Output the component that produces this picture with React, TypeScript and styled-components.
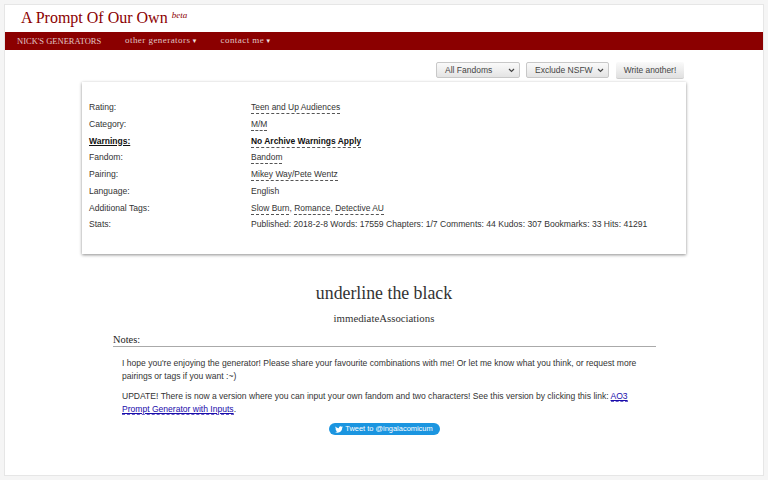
import React from "react";
import styled, { createGlobalStyle } from "styled-components";

const Global = createGlobalStyle`
  html, body { margin: 0; padding: 0; background: #f5f5f5; }
  #root { display: block; }
`;

const Page = styled.div`
  box-sizing: border-box;
  width: 768px;
  height: 480px;
  padding: 5px;
  background: #f5f5f5;
  font-family: "Liberation Sans", Arial, sans-serif;
  overflow: hidden;
`;

const Sheet = styled.main`
  box-sizing: border-box;
  width: 758px;
  height: 470px;
  background: #fff;
  box-shadow: 0 0 0 1px #e6e6e6;
  display: flex;
  flex-direction: column;
`;

const Header = styled.header`
  height: 27px;
  padding-left: 16px;
  display: flex;
  align-items: flex-start;
`;

const Title = styled.h1`
  margin: 3px 0 0;
  font: 400 16px/20px "Liberation Serif", "Times New Roman", serif;
  color: #8b0000;
  white-space: nowrap;
`;

const Beta = styled.sup`
  font-size: 9px;
  font-style: italic;
  line-height: 0;
  vertical-align: 5px;
`;

const Nav = styled.nav`
  height: 18px;
  background: #8b0000;
  display: flex;
  align-items: center;
  padding-left: 12px;
  font: 400 9px/17px "Liberation Serif", "Times New Roman", serif;
  color: #e0c4c4;
`;

const NavBrand = styled.span`
  width: 108px;
  font-size: 8.5px;
  white-space: nowrap;
`;

const NavItem = styled.span`
  width: 95.5px;
  white-space: nowrap;
  letter-spacing: 0.45px;
`;

const Caret = styled.span`
  font-size: 6px;
  color: #f2e0e0;
  margin-left: 1px;
`;

const Controls = styled.div`
  height: 32px;
  padding: 12px 79px 0 0;
  box-sizing: border-box;
  display: flex;
  justify-content: flex-end;
`;

const Control = styled.div<{ $w: number; $gap: number }>`
  box-sizing: border-box;
  width: ${(p) => p.$w}px;
  height: 16px;
  margin-right: ${(p) => p.$gap}px;
  display: flex;
  align-items: center;
  justify-content: space-between;
  padding: 0 4px 0 8px;
  font-size: 8.5px;
  color: #444;
  background: linear-gradient(#fafafa, #e4e4e4);
  border: 1px solid #c8c8c8;
  border-radius: 2px;
  white-space: nowrap;
`;

const Button = styled.button`
  box-sizing: border-box;
  width: 68px;
  height: 17px;
  padding: 0;
  font: 400 8.4px "Liberation Sans", Arial, sans-serif;
  color: #444;
  background: linear-gradient(#fafafa, #e0e0e0);
  border: 0;
  border-bottom: 1px solid #ccc;
  border-radius: 2px;
`;

const Card = styled.section`
  box-sizing: border-box;
  width: 604px;
  height: 172px;
  margin-left: 77px;
  padding: 17px 7px 0;
  background: #fff;
  box-shadow: 0 1px 3px rgba(0, 0, 0, 0.45);
  flex-shrink: 0;
`;

const Row = styled.div`
  display: grid;
  grid-template-columns: 162px 1fr;
  height: 16.75px;
  font-size: 8.6px;
  line-height: 16px;
  color: #333;
  white-space: nowrap;
`;

const Label = styled.span<{ $strong?: boolean }>`
  font-weight: ${(p) => (p.$strong ? 700 : 400)};
  font-size: ${(p) => (p.$strong ? 8.5 : 8.6)}px;
  color: ${(p) => (p.$strong ? "#111" : "#333")};
  text-decoration: ${(p) => (p.$strong ? "underline" : "none")};
`;

const Value = styled.span<{ $strong?: boolean }>`
  font-weight: ${(p) => (p.$strong ? 700 : 400)};
  color: ${(p) => (p.$strong ? "#111" : "#333")};
`;

const Tag = styled.span`
  font-size: 8.45px;
  border-bottom: 1px dashed #555;
  padding-bottom: 1px;
`;

const Fic = styled.div`
  margin-top: 28px;
  text-align: center;
  color: #333;
  font-family: "Liberation Serif", "Times New Roman", serif;
`;

const FicTitle = styled.h2`
  margin: 0;
  font-weight: 400;
  font-size: 17.8px;
  line-height: 22px;
`;

const Author = styled.div`
  margin-top: 8px;
  font-size: 10.8px;
  line-height: 13px;
`;

const Notes = styled.section`
  margin: 9px 107px 0 108px;
`;

const NotesHead = styled.div`
  font: 400 10.4px/12px "Liberation Serif", "Times New Roman", serif;
  color: #222;
  border-bottom: 1px solid #aaa;
`;

const NotesBody = styled.div`
  padding: 0 15px 0 9px;
  font-size: 8.55px;
  line-height: 13px;
  color: #333;
`;

const Para = styled.p<{ $top: number }>`
  margin: ${(p) => p.$top}px 0 0;
`;

const Link = styled.a`
  color: #1a0dab;
  text-decoration: underline;
  border-bottom: 1px dashed #6a60c8;
`;

const TweetWrap = styled.div`
  margin-top: 7px;
  display: flex;
  justify-content: center;
`;

const Tweet = styled.a`
  box-sizing: border-box;
  width: 111px;
  height: 12px;
  border-radius: 6px;
  background: #1b95e0;
  color: #fff;
  font-size: 7.45px;
  line-height: 12px;
  display: flex;
  align-items: center;
  justify-content: center;
  gap: 2px;
`;

const Chevron = () => (
  <svg width="7" height="5" viewBox="0 0 7 5" aria-hidden="true">
    <path d="M1 1l2.5 2.5L6 1" fill="none" stroke="#444" strokeWidth="1.2" />
  </svg>
);

const Bird = () => (
  <svg width="8" height="7" viewBox="0 0 24 20" aria-hidden="true">
    <path
      fill="#fff"
      d="M24 2.4c-.9.4-1.8.7-2.8.8 1-.6 1.8-1.6 2.2-2.7-1 .6-2 1-3.1 1.2A4.9 4.9 0 0 0 11.900 6.200C7.800 6 4.200 4 1.700.9c-1.300 2.200-.7 5.100 1.500 6.600-.8 0-1.600-.2-2.200-.6 0 2.400 1.700 4.400 3.900 4.900-.7.2-1.500.2-2.200.1.600 2 2.400 3.400 4.600 3.400A9.900 9.900 0 0 1 0 17.300 14 14 0 0 0 7.500 19.500c9.100 0 14.300-7.700 14-14.600 1-.7 1.800-1.500 2.500-2.500z"
    />
  </svg>
);

const rows: { k: string; v: React.ReactNode; strong?: boolean }[] = [
  { k: "Rating:", v: <Tag>Teen and Up Audiences</Tag> },
  { k: "Category:", v: <Tag>M/M</Tag> },
  { k: "Warnings:", v: <Tag>No Archive Warnings Apply</Tag>, strong: true },
  { k: "Fandom:", v: <Tag>Bandom</Tag> },
  { k: "Pairing:", v: <Tag>Mikey Way/Pete Wentz</Tag> },
  { k: "Language:", v: "English" },
  {
    k: "Additional Tags:",
    v: (
      <>
        <Tag>Slow Burn</Tag>, <Tag>Romance</Tag>, <Tag>Detective AU</Tag>
      </>
    ),
  },
  {
    k: "Stats:",
    v: "Published: 2018-2-8 Words: 17559 Chapters: 1/7 Comments: 44 Kudos: 307 Bookmarks: 33 Hits: 41291",
  },
];

export default function App() {
  return (
    <Page>
      <Global />
      <Sheet>
        <Header>
          <Title>
            A Prompt Of Our Own <Beta>beta</Beta>
          </Title>
        </Header>
        <Nav>
          <NavBrand>NICK'S GENERATORS</NavBrand>
          <NavItem>
            other generators<Caret>▼</Caret>
          </NavItem>
          <NavItem>
            contact me<Caret>▼</Caret>
          </NavItem>
        </Nav>
        <Controls>
          <Control $w={84} $gap={6}>
            All Fandoms <Chevron />
          </Control>
          <Control $w={83} $gap={7}>
            Exclude NSFW <Chevron />
          </Control>
          <Button>Write another!</Button>
        </Controls>
        <Card>
          {rows.map((r) => (
            <Row key={r.k}>
              <Label $strong={r.strong}>{r.k}</Label>
              <Value $strong={r.strong}>{r.v}</Value>
            </Row>
          ))}
        </Card>
        <Fic>
          <FicTitle>underline the black</FicTitle>
          <Author>immediateAssociations</Author>
        </Fic>
        <Notes>
          <NotesHead>Notes:</NotesHead>
          <NotesBody>
            <Para $top={10}>
              I hope you're enjoying the generator! Please share your favourite combinations with me! Or let me know what you think, or request more pairings or tags if you want :~)
            </Para>
            <Para $top={7}>
              UPDATE! There is now a version where you can input your own fandom and two characters! See this version by clicking this link: <Link>AO3 Prompt Generator with Inputs</Link>.
            </Para>
          </NotesBody>
        </Notes>
        <TweetWrap>
          <Tweet>
            <Bird /> Tweet to @ingalacomicum
          </Tweet>
        </TweetWrap>
      </Sheet>
    </Page>
  );
}
